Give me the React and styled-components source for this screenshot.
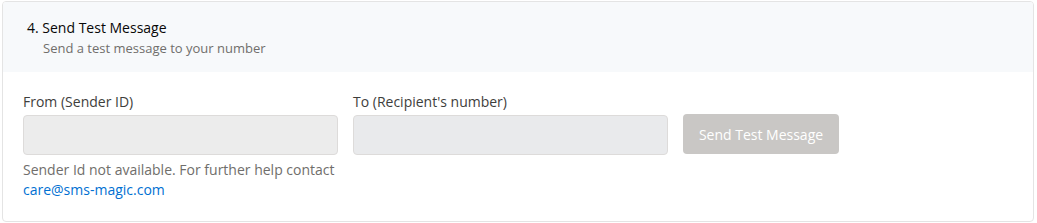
import React from "react";
import styled, { createGlobalStyle } from "styled-components";

const Global = createGlobalStyle`
  html, body { margin: 0; padding: 0; background: #ffffff; }
  body { font-family: "Open Sans", "Noto Sans", Arial, sans-serif; color: #3e3e3c; }
  * { box-sizing: border-box; }
`;

const Page = styled.div`
  padding: 1px 3px 1px 2px;
`;

const Card = styled.section`
  border: 1px solid #e4e4e4;
  border-radius: 4px;
  background: #ffffff;
  overflow: hidden;
  height: 221px;
`;

const Header = styled.header`
  background: #f7f9fb;
  height: 70px;
  padding: 16px 0 0 24px;
`;

const Title = styled.h2`
  margin: 0;
  font-size: 14px;
  font-weight: 400;
  line-height: 20px;
  color: #080707;
`;

const Subtitle = styled.p`
  margin: 0;
  padding-left: 16px;
  font-size: 13px;
  line-height: 20px;
  color: #706e6b;
`;

const Body = styled.div`
  display: flex;
  align-items: flex-start;
  gap: 15px;
  padding: 20px 20px 0 20px;
`;

const Field = styled.div`
  width: 315px;
  display: flex;
  flex-direction: column;
`;

const Label = styled.label`
  font-size: 14px;
  line-height: 20px;
  color: #3e3e3c;
  margin-bottom: 3px;
`;

const Input = styled.div`
  height: 40px;
  border: 1px solid #dddbda;
  border-radius: 4px;
  background: ${(p) => p.$bg || "#ececec"};
`;

const Help = styled.div`
  margin-top: 5px;
  font-size: 14px;
  line-height: 20px;
  color: #706e6b;
`;

const Link = styled.a`
  color: #0070d2;
  text-decoration: none;
`;

const Button = styled.button`
  margin-top: 22px;
  width: 156px;
  height: 40px;
  border: none;
  border-radius: 4px;
  background: #c9c7c5;
  color: #ffffff;
  font-family: inherit;
  font-size: 14px;
  padding: 0;
`;

export default function App() {
  return (
    <>
      <Global />
      <Page>
        <Card>
          <Header>
            <Title>4. Send Test Message</Title>
            <Subtitle>Send a test message to your number</Subtitle>
          </Header>
          <Body>
            <Field>
              <Label>From (Sender ID)</Label>
              <Input />
              <Help>
                Sender Id not available. For further help contact
                <br />
                <Link href="#">care@sms-magic.com</Link>
              </Help>
            </Field>
            <Field>
              <Label>To (Recipient's number)</Label>
              <Input $bg="#e9eaec" />
            </Field>
            <Button disabled>Send Test Message</Button>
          </Body>
        </Card>
      </Page>
    </>
  );
}
